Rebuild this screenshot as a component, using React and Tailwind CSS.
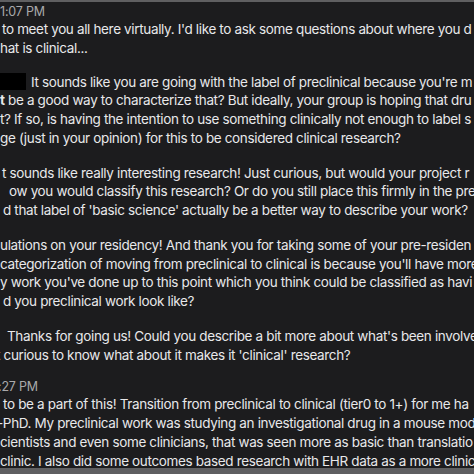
import React from 'react';

// Cropped chat transcript: each paragraph keeps its visible lines as they are cut by the window
const Stamp = ({ children, className = '' }) => (
  <div className={`text-[12.5px] leading-[17px] tracking-[-0.2px] text-[#a9a9ab] whitespace-nowrap ${className}`}>{children}</div>
);

const Line = ({ children, className = '' }) => (
  <div className={`whitespace-nowrap ${className}`}>{children}</div>
);

const App = () => {
  return (
    <div
      className="w-[474px] h-[474px] overflow-hidden bg-[#1c1c1e] flex flex-col text-[13.5px] leading-[18.75px] tracking-[-0.35px] text-[#e8e8ea]"
      style={{ fontFamily: 'Inter, "Noto Sans", "Liberation Sans", sans-serif' }}
    >
      <div className="h-[2px] bg-[#5f5f61] shrink-0" />

      <div className="flex-1 overflow-hidden">
        <Stamp className="pt-[1px]">1:07 PM</Stamp>
        <div>
          <Line className="pl-[2px]">to meet you all here virtually. I'd like to ask some questions about where you d</Line>
          <Line>hat is clinical...</Line>
        </div>

        <div className="mt-[15px]">
          <Line className="flex items-center">
            <span className="inline-block w-[26px] h-[17px] bg-black mr-[5px]" />
            <span>It sounds like you are going with the label of preclinical because you're m</span>
          </Line>
          <Line><span className="font-bold">t</span> be a good way to characterize that? But ideally, your group is hoping that dru</Line>
          <Line>t? If so, is having the intention to use something clinically not enough to label s</Line>
          <Line>ge (just in your opinion) for this to be considered clinical research?</Line>
        </div>

        <div className="mt-4">
          <Line className="pl-[2px]">t sounds like really interesting research! Just curious, but would your project r</Line>
          <Line className="pl-[9px]">ow you would classify this research? Or do you still place this firmly in the pre</Line>
          <Line className="pl-[3px]">d that label of 'basic science' actually be a better way to describe your work?</Line>
        </div>

        <div className="mt-4">
          <Line>ulations on your residency! And thank you for taking some of your pre-residen</Line>
          <Line>categorization of moving from preclinical to clinical is because you'll have more</Line>
          <Line>y work you've done up to this point which you think could be classified as havi</Line>
          <Line className="pl-[3px]">d you preclinical work look like?</Line>
        </div>

        <div className="mt-4">
          <Line className="pl-[7px]">Thanks for going us! Could you describe a bit more about what's been involve</Line>
          <Line className="-ml-[4px]">t curious to know what about it makes it 'clinical' research?</Line>
        </div>

        <Stamp className="mt-[14px] -ml-[2px]">:27 PM</Stamp>
        <div>
          <Line className="pl-[3px]">to be a part of this! Transition from preclinical to clinical (tier0 to 1+) for me ha</Line>
          <Line className="-ml-[3px]">-PhD. My preclinical work was studying an investigational drug in a mouse mod</Line>
          <Line>cientists and even some clinicians, that was seen more as basic than translatio</Line>
          <Line>clinic. I also did some outcomes based research with EHR data as a more clinic</Line>
        </div>
      </div>

      <div className="h-[6px] bg-[#5f5f61] shrink-0" />
    </div>
  );
};

export default App;
